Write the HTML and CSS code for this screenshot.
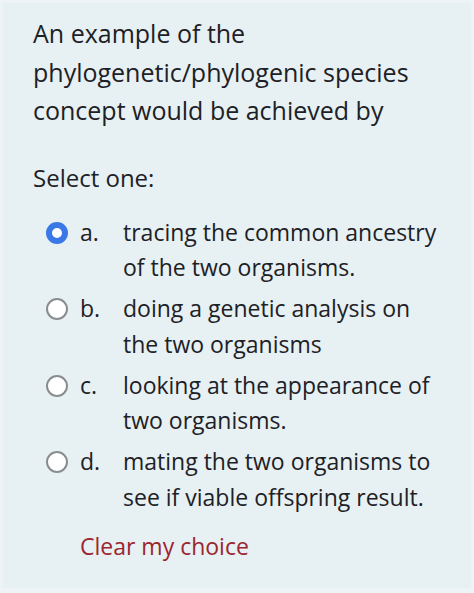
FILE: index.html
```html
<!DOCTYPE html>
<html lang="en">
<head>
    <meta charset="UTF-8">
    <meta name="viewport" content="width=device-width, initial-scale=1.0">
    <title>Question</title>
    <link rel="stylesheet" href="styles.css">
</head>
<body>
    <div class="que">
        <div class="qtext">An example of the phylogenetic/phylogenic species concept would be achieved by</div>

        <div class="prompt">Select one:</div>

        <div class="answer">
            <label class="option">
                <span class="radio checked"></span>
                <span class="letter">a.</span>
                <span class="option-text">tracing the common ancestry of the two organisms.</span>
            </label>
            <label class="option">
                <span class="radio"></span>
                <span class="letter">b.</span>
                <span class="option-text">doing a genetic analysis on the two organisms</span>
            </label>
            <label class="option">
                <span class="radio"></span>
                <span class="letter">c.</span>
                <span class="option-text">looking at the appearance of two organisms.</span>
            </label>
            <label class="option">
                <span class="radio"></span>
                <span class="letter">d.</span>
                <span class="option-text">mating the two organisms to see if viable offspring result.</span>
            </label>
        </div>

        <a class="clear-link" href="#">Clear my choice</a>
    </div>
</body>
</html>
```

FILE: styles.css
```css
* {
    margin: 0;
    padding: 0;
    box-sizing: border-box;
}

body {
    font-family: 'Open Sans', 'Noto Sans', sans-serif;
    background: #eef4f6;
    color: #1d2125;
    padding: 3px;
}

.que {
    background: #e7f0f3;
    min-height: 585px;
    padding: 11px 20px 0 30px;
}

.qtext {
    font-size: 25px;
    line-height: 38.5px;
    max-width: 400px;
}

.prompt {
    font-size: 24px;
    line-height: 38px;
    margin-top: 29px;
}

.answer {
    display: flex;
    flex-direction: column;
    gap: 5.5px;
    margin-top: 18px;
}

.option {
    display: flex;
    align-items: flex-start;
    font-size: 23px;
    line-height: 35.5px;
}

.radio {
    flex: none;
    width: 22px;
    height: 22px;
    margin: 7px 0 0 13px;
    border-radius: 50%;
    border: 2.5px solid #8a8d90;
    background: #fff;
}

.radio.checked {
    border: 6.5px solid #3b78e7;
}

.letter {
    flex: none;
    width: 43px;
    margin-left: 12px;
}

.option-text {
    flex: 1;
    max-width: 320px;
}

.clear-link {
    display: inline-block;
    margin: 12px 0 0 47px;
    font-size: 23px;
    line-height: 38px;
    color: #9b2630;
    text-decoration: none;
}
```
